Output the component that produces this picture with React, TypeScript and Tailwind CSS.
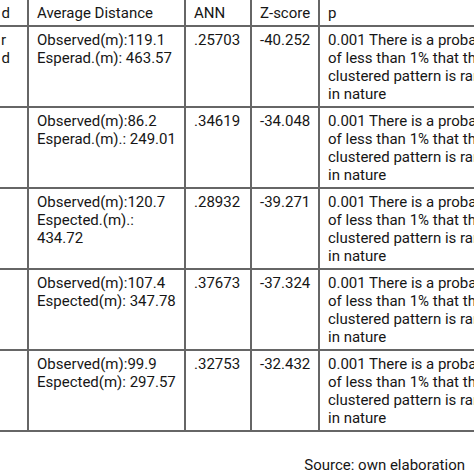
const rows = [
  {
    first: ["r", "d"],
    dist: ["Observed(m):119.1", "Esperad.(m): 463.57"],
    ann: ".25703",
    z: "-40.252",
  },
  {
    first: [],
    dist: ["Observed(m):86.2", "Esperad.(m).: 249.01"],
    ann: ".34619",
    z: "-34.048",
  },
  {
    first: [],
    dist: ["Observed(m):120.7", "Espected.(m).: 434.72"],
    ann: ".28932",
    z: "-39.271",
  },
  {
    first: [],
    dist: ["Observed(m):107.4", "Espected(m): 347.78"],
    ann: ".37673",
    z: "-37.324",
  },
  {
    first: [],
    dist: ["Observed(m):99.9", "Espected(m): 297.57"],
    ann: ".32753",
    z: "-32.432",
  },
];

const pText =
  "0.001 There is a probability of less than 1% that the clustered pattern is random in nature";

const cell = "border-2 border-[#666] align-top pt-[4px] pb-[3px] pl-[8px] pr-[5px]";

export default function App() {
  return (
    <div
      className="h-[474px] w-[474px] overflow-hidden bg-white text-[15px] leading-[18px] text-[#161616]"
      style={{ fontFamily: "Roboto, 'Liberation Sans', sans-serif" }}
    >
      <table className="ml-[-34px] mt-[-2px] w-[552px] min-w-[552px] table-fixed border-collapse">
        <thead>
          <tr>
            <th className={`${cell} w-[61px] !pr-[17px] text-right font-normal`}>d</th>
            <th className={`${cell} w-[157px] text-left font-normal`}>Average Distance</th>
            <th className={`${cell} w-[66px] text-left font-normal`}>ANN</th>
            <th className={`${cell} w-[68px] text-left font-normal`}>Z-score</th>
            <th className={`${cell} w-[200px] text-left font-normal`}>p</th>
          </tr>
        </thead>
        <tbody>
          {rows.map((r, i) => (
            <tr key={i}>
              <td className={`${cell} !pr-[17px] text-right`}>
                {r.first.map((f, j) => (
                  <span key={j} className={`block ${j === 0 ? "pr-[4px]" : ""}`}>
                    {f}
                  </span>
                ))}
              </td>
              <td className={cell}>
                {r.dist.map((d, j) => (
                  <span key={j} className="block">
                    {d}
                  </span>
                ))}
              </td>
              <td className={cell}>{r.ann}</td>
              <td className={cell}>{r.z}</td>
              <td className={cell}>{pText}</td>
            </tr>
          ))}
        </tbody>
      </table>
      <div className="mt-[24px] pr-[9px] text-right">Source: own elaboration</div>
    </div>
  );
}
